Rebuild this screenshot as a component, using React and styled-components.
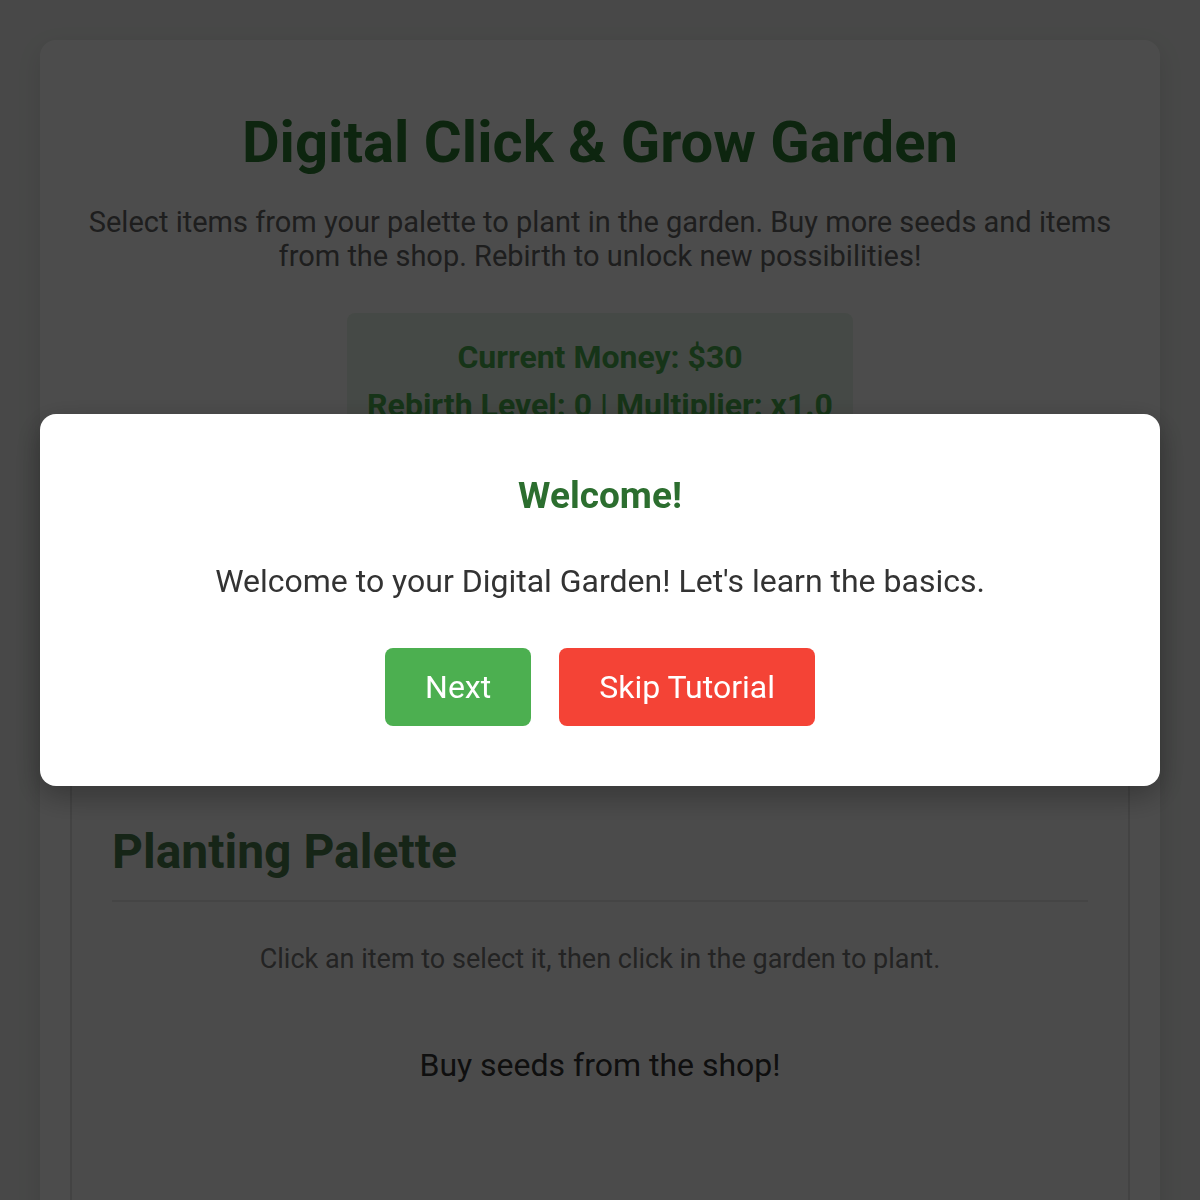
import React, { useState } from "react";
import styled, { createGlobalStyle } from "styled-components";

const GlobalStyle = createGlobalStyle`
  * {
    box-sizing: border-box;
  }

  body {
    margin: 0;
    background: #f0f2f0;
    color: #333;
    font-family: Roboto, "Liberation Sans", sans-serif;
    font-size: 32px;
    line-height: 38px;
    overflow: hidden;
  }
`;

const Page = styled.div`
  padding: 40px;
`;

const Container = styled.main`
  padding: 30px;
  border-radius: 16px;
  background: #fff;
  box-shadow: 0 8px 24px rgba(0, 0, 0, 0.1);
`;

const Header = styled.header`
  display: flex;
  flex-direction: column;
  align-items: center;
  text-align: center;
`;

const Title = styled.h1`
  margin: 40px 0 31px;
  color: #2e7d32;
  font-size: 58px;
  line-height: 64px;
`;

const Intro = styled.p`
  margin: 0 0 40px;
  color: #666;
  font-size: 29px;
  line-height: 34px;
`;

const Stats = styled.div`
  padding: 20px;
  border-radius: 8px;
  background: #e8f5e9;
  color: #4caf50;
  font-weight: 700;
  line-height: 48px;
`;

const Garden = styled.section`
  height: 233px;
  margin: 40px 0;
`;

const Palette = styled.section`
  padding: 60px 40px 40px;
  border: 2px solid #e0e0e0;
  border-radius: 16px;
  background: #fcfcfc;
`;

const PaletteTitle = styled.h2`
  margin: 0 0 41px;
  padding-bottom: 20px;
  border-bottom: 2px solid #e8e8e8;
  color: #4a7c4e;
  font-size: 48px;
  line-height: 56px;
`;

const Hint = styled.p`
  margin: 0 0 41px;
  color: #777;
  font-size: 27px;
  line-height: 32px;
  text-align: center;
`;

const Items = styled.div`
  min-height: 320px;
  padding: 30px;
  text-align: center;
`;

const Overlay = styled.div`
  position: fixed;
  inset: 0;
  display: flex;
  align-items: center;
  justify-content: center;
  padding: 40px;
  background: rgba(0, 0, 0, 0.7);
`;

const Dialog = styled.div`
  width: 100%;
  padding: 60px;
  border-radius: 16px;
  background: #fff;
  box-shadow: 0 10px 30px rgba(0, 0, 0, 0.3);
  text-align: center;
`;

const DialogTitle = styled.h2`
  margin: 0 0 38px;
  color: #2c6e2f;
  font-size: 37px;
  line-height: 44px;
`;

const DialogText = styled.p`
  margin: 0 0 42px;
  line-height: 50px;
`;

const Actions = styled.div`
  display: flex;
  flex-wrap: wrap;
  justify-content: center;
  gap: 28px;
`;

const Button = styled.button`
  padding: 20px 40px;
  border: 0;
  border-radius: 8px;
  background: ${({ $danger }) => ($danger ? "#f44336" : "#4caf50")};
  color: #fff;
  font: inherit;
  cursor: pointer;
`;

export default function App() {
  const [open, setOpen] = useState(true);

  return (
    <>
      <GlobalStyle />
      <Page>
        <Container>
          <Header>
            <Title>Digital Click &amp; Grow Garden</Title>
            <Intro>
              Select items from your palette to plant in the garden. Buy more
              seeds and items from the shop. Rebirth to unlock new
              possibilities!
            </Intro>
            <Stats>
              <div>Current Money: $30</div>
              <div>Rebirth Level: 0 | Multiplier: x1.0</div>
            </Stats>
          </Header>
          <Garden />
          <Palette>
            <PaletteTitle>Planting Palette</PaletteTitle>
            <Hint>
              Click an item to select it, then click in the garden to plant.
            </Hint>
            <Items>Buy seeds from the shop!</Items>
          </Palette>
        </Container>
      </Page>
      {open && (
        <Overlay>
          <Dialog role="dialog" aria-modal="true" aria-labelledby="welcome">
            <DialogTitle id="welcome">Welcome!</DialogTitle>
            <DialogText>
              Welcome to your Digital Garden! Let's learn the basics.
            </DialogText>
            <Actions>
              <Button type="button">Next</Button>
              <Button type="button" $danger onClick={() => setOpen(false)}>
                Skip Tutorial
              </Button>
            </Actions>
          </Dialog>
        </Overlay>
      )}
    </>
  );
}
